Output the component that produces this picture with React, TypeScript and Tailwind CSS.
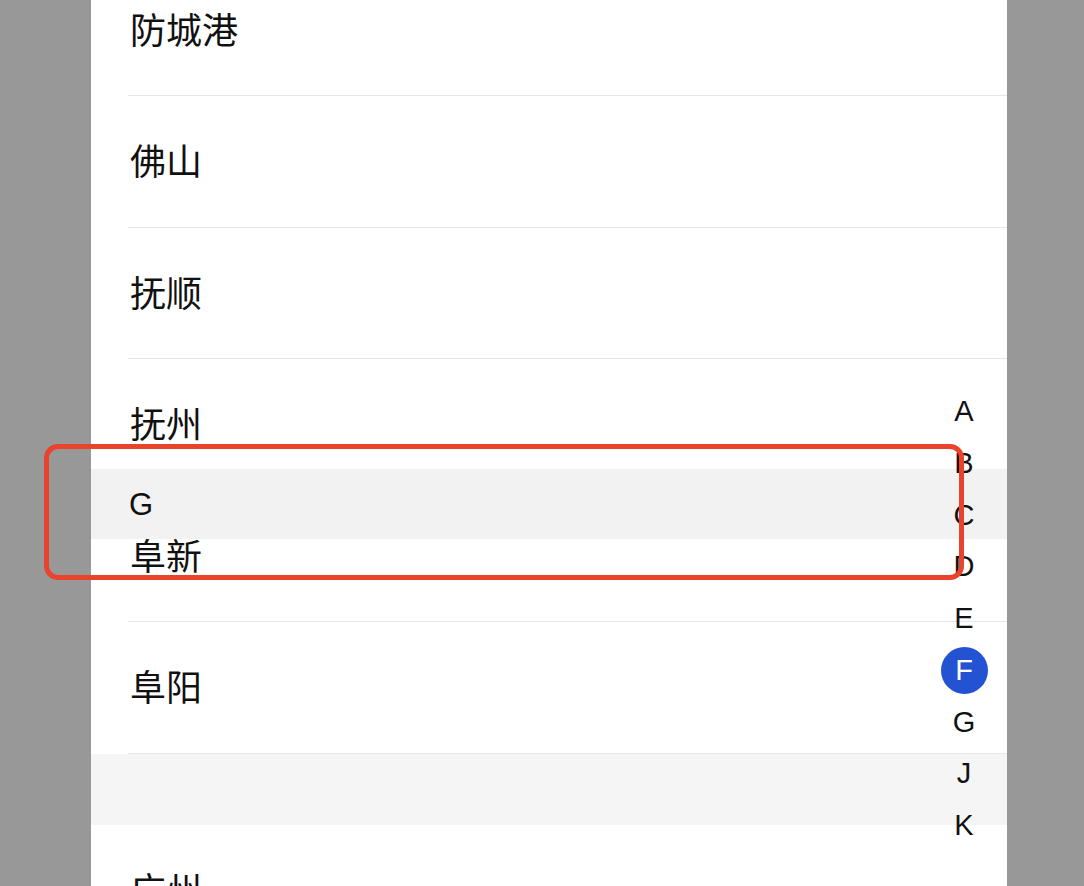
import React from 'react';

const cities = ['防城港', '佛山', '抚顺', '抚州', '阜新', '阜阳'];
const letters = ['A', 'B', 'C', 'D', 'E', 'F', 'G', 'J', 'K'];

function CityRow({ name }: { name: string }) {
  return (
    <div className="ml-[37px] h-[131.5px] border-b border-[#e6e6e6] flex items-center pl-[2px] pt-[4px] text-[36px] text-[#111]">
      {name}
    </div>
  );
}

export default function App() {
  return (
    <div
      className="relative h-[886px] w-full overflow-hidden bg-[#989898] pl-[91px] pr-[77px]"
      style={{ fontFamily: '"Liberation Sans", "Noto Sans CJK SC", sans-serif' }}
    >
      {/* list panel */}
      <div className="relative h-full bg-white overflow-hidden">
        {/* scrolled content */}
        <div className="-mt-[35.5px]">
          {cities.map((c) => (
            <CityRow key={c} name={c} />
          ))}
          <div className="h-[71px] bg-[#f5f5f5]" />
          <div className="ml-[37px] h-[131.5px] flex items-center pl-[2px] pt-[4px] text-[36px] text-[#111]">
            广州
          </div>
        </div>

        {/* sticky section header */}
        <div className="absolute left-0 right-0 top-[469px] h-[70px] bg-[#f2f2f2] flex items-center pl-[38px] pt-[2px] text-[31px] text-[#111]">
          G
        </div>

        {/* index bar */}
        <div className="absolute left-[849px] top-[386px] w-[48px] flex flex-col items-center">
          {letters.map((l) =>
            l === 'F' ? (
              <div key={l} className="h-[51.75px] flex items-center justify-center">
                <div className="w-[47px] h-[47px] rounded-full bg-[#2352d3] text-white text-[29px] flex items-center justify-center">
                  {l}
                </div>
              </div>
            ) : (
              <div key={l} className="h-[51.75px] flex items-center justify-center text-[29px] text-[#111]">
                {l}
              </div>
            )
          )}
        </div>
      </div>

      {/* highlight annotation */}
      <div className="absolute left-[44px] top-[444px] w-[920px] h-[136px] rounded-[14px] border-[5px] border-[#e8432b]" />
    </div>
  );
}
